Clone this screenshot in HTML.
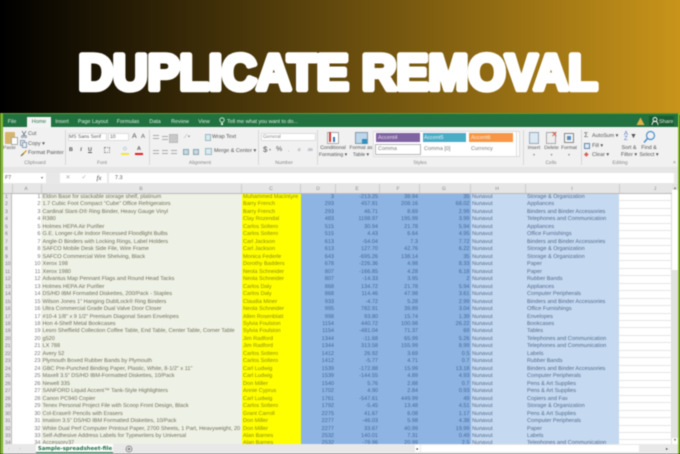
<!DOCTYPE html>
<html><head><meta charset="utf-8"><title>Duplicate Removal</title>
<style>
html,body{margin:0;padding:0;background:#000}
body{width:680px;height:454px;overflow:hidden;position:relative;font-family:"Liberation Sans",sans-serif;text-rendering:geometricPrecision}
#top{position:absolute;left:0;top:0;width:680px;height:115px;background:linear-gradient(90deg,#000 0%,#c8941a 100%)}
#top svg{position:absolute;left:0;top:0;filter:blur(.4px)}
#app{position:absolute;left:0;top:113px;width:680px;height:341px;background:#f0f0f0;overflow:hidden;filter:blur(.5px)}
#app *{box-sizing:border-box}
.a{position:absolute;white-space:nowrap;font-size:5.4px;line-height:8px;color:#555}
.c{transform:translateX(-50%);text-align:center}
.w{color:#dfeee2}
.l{color:#888;font-size:5px}
.b{position:absolute}
#grid{position:absolute;left:3px;top:81px;width:669px}
#grid p{margin:0;height:7.47px;display:grid;grid-template-columns:9px 29px 200.5px 59px 34.5px 44px 40px 51.5px 55px 93.5px 52.5px;font-size:5.55px;line-height:7.47px}
#grid i{font-style:normal;white-space:nowrap;overflow:hidden;display:block;height:7.47px;padding:0 1px}
#grid i:nth-child(1){background:#e6e6e6;color:#777;padding:0 0 0 2px;border-right:1px solid #bbb;font-size:5px}
#grid i:nth-child(2){background:#fff;color:#777;text-align:right;padding-right:.5px}
#grid i:nth-child(3){background:#eef1e5;color:#6f6f5a;padding-left:1.5px}
#grid i:nth-child(4){background:#ff0;color:#8f8f10;padding-left:1.5px}
#grid i:nth-child(n+5):nth-child(-n+8){background:#8db4e2;color:#47699a;text-align:right}
#grid i:nth-child(9),#grid i:nth-child(10){background:#c5d9f1;color:#546c8c;padding-left:1.5px}
#grid i:nth-child(11){background:#fff;border-bottom:1px solid #e6e6e6;border-right:1px solid #ddd}
</style></head><body>
<div id="top">
<svg width="680" height="115"><text x="78.5" y="89.5" font-family="Liberation Sans,sans-serif" font-weight="700" font-size="50" textLength="519" lengthAdjust="spacingAndGlyphs" fill="#fff" stroke="#fff" stroke-width="5.6" stroke-linejoin="round">DUPLICATE REMOVAL</text></svg>
</div>
<div id="app">
<div class="b" style="left:0;top:0;width:680px;height:14px;background:#217240"></div>
<div class="b" style="left:0;top:0;width:680px;height:1px;background:#5e9a30"></div>
<div class="b" style="left:27px;top:4px;width:24px;height:10px;background:#f4f4f4"></div>
<span class="a c w" style="left:12px;top:5px">File</span>
<span class="a c" style="left:39px;top:5px;color:#217346">Home</span>
<span class="a c w" style="left:62px;top:5px">Insert</span>
<span class="a c w" style="left:93px;top:5px">Page Layout</span>
<span class="a c w" style="left:128px;top:5px">Formulas</span>
<span class="a c w" style="left:155px;top:5px">Data</span>
<span class="a c w" style="left:180px;top:5px">Review</span>
<span class="a c w" style="left:204px;top:5px">View</span>
<svg class="b" style="left:219px;top:4px" width="6" height="9"><circle cx="3" cy="3" r="2.2" fill="none" stroke="#e8f2e8" stroke-width=".8"/><path d="M2 6h2v2H2z" fill="#e8f2e8"/></svg>
<span class="a w" style="left:227px;top:5px">Tell me what you want to do...</span>
<svg class="b" style="left:636px;top:4px" width="9" height="9"><path d="M4.5 .5L8.5 8H.5z" fill="#e3b04a"/></svg>
<div class="b" style="left:649px;top:3px;width:25px;height:10px;background:#1a5c33"></div>
<span class="a w" style="left:659px;top:5px">Share</span>
<svg class="b" style="left:651px;top:3px" width="8" height="10"><circle cx="4" cy="3.5" r="2" fill="none" stroke="#fff" stroke-width=".9"/><path d="M1 9c0-5 6-5 6 0" fill="none" stroke="#fff" stroke-width=".9"/></svg>

<div class="b" style="left:2px;top:14px;width:676px;height:40px;background:#f1f1f1"></div>
<div class="b" style="left:2px;top:54px;width:676px;height:6px;background:#e6e6e6"></div>
<!-- clipboard -->
<div class="b" style="left:5px;top:19px;width:10px;height:12px;background:#d8b36a;border-radius:1px"></div>
<div class="b" style="left:11px;top:24px;width:7px;height:8px;background:#fff;border:.5px solid #aaa"></div>
<span class="a" style="left:3px;top:31px;font-size:5px;color:#666">Paste</span>
<svg class="b" style="left:20px;top:17px" width="8" height="8"><path d="M2 1l3 5M6 1L3 6" stroke="#6a7a8a" stroke-width=".8" fill="none"/><circle cx="2.4" cy="6.6" r="1" fill="none" stroke="#6a7a8a" stroke-width=".6"/><circle cx="5.6" cy="6.6" r="1" fill="none" stroke="#6a7a8a" stroke-width=".6"/></svg>
<div class="b" style="left:20px;top:27px;width:5px;height:6px;background:#eaf0f6;border:.5px solid #8aa0b8"></div>
<div class="b" style="left:22px;top:29px;width:5px;height:6px;background:#eaf0f6;border:.5px solid #8aa0b8"></div>
<svg class="b" style="left:20px;top:36px" width="8" height="8"><path d="M1 7L4 4" stroke="#7a5a30" stroke-width="1.2"/><path d="M3.5 3.5L6 1l1 1-2.5 2.5z" fill="#e0a030"/></svg>
<span class="a" style="left:28px;top:17px">Cut</span>
<span class="a" style="left:28px;top:27px">Copy ▾</span>
<span class="a" style="left:28px;top:36px">Format Painter</span>
<span class="a c l" style="left:35px;top:46px">Clipboard</span>
<div class="b" style="left:65px;top:17px;width:1px;height:35px;background:#d8d8d8"></div>
<!-- font -->
<div class="b" style="left:68px;top:20px;width:39px;height:8px;background:#fff;border:.5px solid #ddd"></div>
<span class="a" style="left:69px;top:20px;font-size:5px">MS Sans Serif</span>
<div class="b" style="left:108px;top:20px;width:21px;height:8px;background:#fff;border:.5px solid #ddd"></div>
<span class="a" style="left:110px;top:20px;font-size:5px">10</span>
<span class="a" style="left:132px;top:20px;font-size:7px">A</span><span class="a" style="left:141px;top:20px;font-size:6px">A</span>
<span class="a c" style="left:71px;top:33px;font-weight:700">B</span>
<span class="a c" style="left:81px;top:33px;font-style:italic;font-weight:700">I</span>
<span class="a c" style="left:90px;top:33px;text-decoration:underline;font-weight:700">U</span>
<div class="b" style="left:104px;top:34px;width:6px;height:6px;border:.6px dotted #888"></div>
<div class="b" style="left:121px;top:40px;width:8px;height:2px;background:#f5e33d"></div>
<span class="a c" style="left:125px;top:32px;color:#6a8fc0">◇</span>
<span class="a c" style="left:139px;top:32px;font-weight:700;color:#555">A</span>
<div class="b" style="left:135px;top:40px;width:8px;height:2px;background:#e21b1b"></div>
<span class="a c l" style="left:102px;top:46px">Font</span>
<div class="b" style="left:149px;top:17px;width:1px;height:35px;background:#d8d8d8"></div>
<!-- alignment -->
<div class="b" style="left:153px;top:22px;width:6px;height:4px;border-top:1px solid #aaa;border-bottom:1px solid #aaa"></div>
<div class="b" style="left:162px;top:23px;width:6px;height:4px;border-top:1px solid #aaa;border-bottom:1px solid #aaa"></div>
<div class="b" style="left:169px;top:21px;width:9px;height:9px;background:#c8c8c8;border:1px solid #bbb"></div>
<span class="a c" style="left:187px;top:20px;color:#888">⟋▾</span>
<div class="b" style="left:153px;top:37px;width:6px;height:4px;border-top:1px solid #aaa;border-bottom:1px solid #aaa"></div>
<div class="b" style="left:162px;top:37px;width:6px;height:4px;border-top:1px solid #aaa;border-bottom:1px solid #aaa"></div>
<div class="b" style="left:171px;top:37px;width:6px;height:4px;border-top:1px solid #aaa;border-bottom:1px solid #aaa"></div>
<div class="b" style="left:183px;top:36px;width:6px;height:6px;background:#c8d6e6;border:.5px solid #8aa"></div>
<div class="b" style="left:193px;top:36px;width:6px;height:6px;background:#c8d6e6;border:.5px solid #8aa"></div>
<div class="b" style="left:205px;top:21px;width:6px;height:7px;background:#dce8f2;border:.5px solid #9bb"></div>
<span class="a" style="left:212px;top:20px">Wrap Text</span>
<div class="b" style="left:205px;top:35px;width:7px;height:7px;background:#dce8f2;border:.5px solid #9bb"></div>
<span class="a" style="left:214px;top:34px">Merge &amp; Center ▾</span>
<span class="a c l" style="left:200px;top:46px">Alignment</span>
<div class="b" style="left:258px;top:17px;width:1px;height:35px;background:#d8d8d8"></div>
<!-- number -->
<div class="b" style="left:261px;top:20px;width:55px;height:8px;background:#fff;border:.5px solid #ddd"></div>
<span class="a" style="left:263px;top:20px;font-size:5px;color:#888">General</span>
<span class="a" style="left:263px;top:32px;font-size:8px;line-height:10px">$</span>
<span class="a" style="left:269px;top:33px;font-size:4px;color:#888">▾</span>
<span class="a" style="left:276px;top:33px;font-size:7px">%</span>
<span class="a" style="left:288px;top:33px;font-size:4px">,</span>
<span class="a" style="left:297px;top:33px;font-size:4px;color:#668">.0</span>
<span class="a" style="left:307px;top:33px;font-size:4px;color:#668">.00</span>
<span class="a c l" style="left:284px;top:46px">Number</span>
<div class="b" style="left:317px;top:17px;width:1px;height:35px;background:#d8d8d8"></div>
<!-- conditional -->
<div class="b" style="left:327px;top:19px;width:12px;height:12px;background:#fff;border:.5px solid #aaa"></div>
<div class="b" style="left:329px;top:19px;width:2px;height:10px;background:#d43a2c"></div>
<div class="b" style="left:333px;top:24px;width:2px;height:5px;background:#3b6fb0"></div>
<span class="a c" style="left:333px;top:31px;font-size:5.1px">Conditional</span>
<span class="a c" style="left:333px;top:38px;font-size:5.1px">Formatting ▾</span>
<div class="b" style="left:355px;top:19px;width:13px;height:12px;background:#bcd7ea;border:.5px solid #89a"></div>
<div class="b" style="left:362px;top:26px;width:5px;height:5px;background:#2f8fc0"></div>
<span class="a c" style="left:361px;top:31px;font-size:5.1px">Format as</span>
<span class="a c" style="left:361px;top:38px;font-size:5.1px">Table ▾</span>
<!-- styles -->
<div class="b" style="left:373px;top:18px;width:147px;height:26px;background:#fff;border:.5px solid #ddd"></div>
<div class="b" style="left:376px;top:20px;width:44px;height:9px;background:#8064a2"></div>
<span class="a" style="left:378px;top:21px;color:#e8e0f0">Accent4</span>
<div class="b" style="left:423px;top:20px;width:43px;height:9px;background:#4bacc6"></div>
<span class="a" style="left:424px;top:21px;color:#e6f5f8">Accent5</span>
<div class="b" style="left:469px;top:20px;width:44px;height:9px;background:#f79646"></div>
<span class="a" style="left:471px;top:21px;color:#fff0e0">Accent6</span>
<div class="b" style="left:375px;top:31px;width:46px;height:11px;background:#fff;border:1px solid #b5b5b5"></div>
<span class="a" style="left:378px;top:32px;color:#777">Comma</span>
<span class="a" style="left:424px;top:32px;color:#777">Comma [0]</span>
<span class="a" style="left:471px;top:32px;color:#777">Currency</span>
<div class="b" style="left:516px;top:18px;width:1px;height:26px;background:#ddd"></div>
<span class="a c l" style="left:420px;top:46px">Styles</span>
<div class="b" style="left:523px;top:17px;width:1px;height:35px;background:#d8d8d8"></div>
<!-- cells -->
<div class="b" style="left:529px;top:19px;width:10px;height:12px;background:#dce8f2;border:.5px solid #9ab"></div>
<div class="b" style="left:546px;top:19px;width:10px;height:12px;background:#eee;border:.5px solid #aaa"></div>
<span class="a" style="left:551px;top:18px;color:#d84a3a;font-size:8px">✕</span>
<div class="b" style="left:564px;top:20px;width:10px;height:10px;background:#f4f4f4;border:1px solid #888"></div>
<div class="b" style="left:567px;top:23px;width:4px;height:4px;background:#5b8fc0"></div>
<span class="a c" style="left:534px;top:31px;font-size:5px">Insert</span>
<span class="a c" style="left:551.5px;top:31px;font-size:5px">Delete</span>
<span class="a c" style="left:569px;top:31px;font-size:5px">Format</span>
<span class="a c" style="left:534px;top:38px;font-size:4px;color:#888">▾</span>
<span class="a c" style="left:551.5px;top:38px;font-size:4px;color:#888">▾</span>
<span class="a c" style="left:569px;top:38px;font-size:4px;color:#888">▾</span>
<span class="a c l" style="left:551px;top:46px">Cells</span>
<div class="b" style="left:581px;top:17px;width:1px;height:35px;background:#d8d8d8"></div>
<!-- editing -->
<span class="a" style="left:584px;top:19px;font-size:7px">Σ</span><span class="a" style="left:592px;top:19px">AutoSum ▾</span>
<div class="b" style="left:584px;top:30px;width:6px;height:6px;background:#dce8f2;border:.5px solid #68a"></div><span class="a" style="left:592px;top:29px">Fill ▾</span>
<span class="a" style="left:584px;top:38px;color:#d8605a;font-size:6px">◆</span><span class="a" style="left:592px;top:38px">Clear ▾</span>
<span class="a" style="left:624px;top:19px;font-size:6px;line-height:5px;color:#5b7cc0;white-space:normal;width:5px">A Z</span>
<span class="a" style="left:630px;top:20px;font-size:7px;color:#555">▼</span>
<svg class="b" style="left:642px;top:17px" width="14" height="14"><circle cx="8.5" cy="5.5" r="4" fill="none" stroke="#4a90d0" stroke-width="1.2"/><path d="M5.5 8.5L2 12.5" stroke="#4a90d0" stroke-width="1.4"/></svg>
<span class="a c" style="left:629px;top:31px">Sort &amp;</span>
<span class="a c" style="left:629px;top:38px">Filter ▾</span>
<span class="a c" style="left:649px;top:31px">Find &amp;</span>
<span class="a c" style="left:649px;top:38px">Select ▾</span>
<span class="a c l" style="left:620px;top:46px">Editing</span>
<span class="a" style="left:673px;top:46px;font-size:5px;color:#777">˄</span>
<!-- formula bar -->
<div class="b" style="left:2px;top:60px;width:676px;height:11px;background:#e8e8e8"></div>
<div class="b" style="left:3px;top:60px;width:43px;height:10px;background:#fff"></div>
<span class="a" style="left:5px;top:60.5px;color:#555">F7</span>
<span class="a" style="left:41px;top:60.5px;font-size:4px;color:#666">▾</span>
<div class="b" style="left:60px;top:60px;width:47px;height:10px;background:#fff"></div>
<span class="a c" style="left:68px;top:60.5px;color:#aaa;font-size:6px">✕</span>
<span class="a c" style="left:84px;top:60.5px;color:#aaa;font-size:6px">✓</span>
<span class="a c" style="left:99px;top:60.5px;font-style:italic;font-family:'Liberation Serif',serif;font-size:7px;color:#555">fx</span>
<div class="b" style="left:109px;top:60px;width:565px;height:10px;background:#fff"></div>
<span class="a" style="left:115px;top:60.5px;color:#555">7.3</span>
<!-- column header -->
<div class="b" style="left:3px;top:71px;width:669px;height:10px;background:#e6e6e6;border-bottom:.5px solid #bbb"></div>
<div class="b" style="left:12px;top:71px;width:1px;height:9px;background:#ccc"></div>
<div class="b" style="left:41px;top:71px;width:1px;height:9px;background:#ccc"></div>
<div class="b" style="left:241px;top:71px;width:1px;height:9px;background:#ccc"></div>
<div class="b" style="left:300px;top:71px;width:1px;height:9px;background:#ccc"></div>
<div class="b" style="left:335px;top:71px;width:1px;height:9px;background:#ccc"></div>
<div class="b" style="left:379px;top:71px;width:1px;height:9px;background:#ccc"></div>
<div class="b" style="left:419px;top:71px;width:1px;height:9px;background:#ccc"></div>
<div class="b" style="left:470px;top:71px;width:1px;height:9px;background:#ccc"></div>
<div class="b" style="left:525px;top:71px;width:1px;height:9px;background:#ccc"></div>
<div class="b" style="left:619px;top:71px;width:1px;height:9px;background:#ccc"></div>
<span class="a c l" style="left:26px;top:72px">A</span><span class="a c l" style="left:141px;top:72px">B</span><span class="a c l" style="left:271px;top:72px">C</span><span class="a c l" style="left:318px;top:72px">D</span><span class="a c l" style="left:357px;top:72px">E</span><span class="a c l" style="left:398px;top:72px">F</span><span class="a c l" style="left:444px;top:72px">G</span><span class="a c l" style="left:497px;top:72px">H</span><span class="a c l" style="left:572px;top:72px">I</span><span class="a c l" style="left:655px;top:72px">J</span>
<!-- grid -->
<div id="grid">
<p><i>1</i><i>1</i><i>Eldon Base for stackable storage shelf, platinum</i><i>Muhammed MacIntyre</i><i>3</i><i>-213.25</i><i>38.94</i><i>35</i><i>Nunavut</i><i>Storage &amp; Organization</i><i></i></p>
<p><i>2</i><i>2</i><i>1.7 Cubic Foot Compact "Cube" Office Refrigerators</i><i>Barry French</i><i>293</i><i>457.81</i><i>208.16</i><i>68.02</i><i>Nunavut</i><i>Appliances</i><i></i></p>
<p><i>3</i><i>3</i><i>Cardinal Slant-D® Ring Binder, Heavy Gauge Vinyl</i><i>Barry French</i><i>293</i><i>46.71</i><i>8.69</i><i>2.99</i><i>Nunavut</i><i>Binders and Binder Accessories</i><i></i></p>
<p><i>4</i><i>4</i><i>R380</i><i>Clay Rozendal</i><i>483</i><i>1198.97</i><i>195.99</i><i>3.99</i><i>Nunavut</i><i>Telephones and Communication</i><i></i></p>
<p><i>5</i><i>5</i><i>Holmes HEPA Air Purifier</i><i>Carlos Soltero</i><i>515</i><i>30.94</i><i>21.78</i><i>5.94</i><i>Nunavut</i><i>Appliances</i><i></i></p>
<p><i>6</i><i>6</i><i>G.E. Longer-Life Indoor Recessed Floodlight Bulbs</i><i>Carlos Soltero</i><i>515</i><i>4.43</i><i>6.64</i><i>4.95</i><i>Nunavut</i><i>Office Furnishings</i><i></i></p>
<p><i>7</i><i>7</i><i>Angle-D Binders with Locking Rings, Label Holders</i><i>Carl Jackson</i><i>613</i><i>-54.04</i><i>7.3</i><i>7.72</i><i>Nunavut</i><i>Binders and Binder Accessories</i><i></i></p>
<p><i>8</i><i>8</i><i>SAFCO Mobile Desk Side File, Wire Frame</i><i>Carl Jackson</i><i>613</i><i>127.70</i><i>42.76</i><i>6.22</i><i>Nunavut</i><i>Storage &amp; Organization</i><i></i></p>
<p><i>9</i><i>9</i><i>SAFCO Commercial Wire Shelving, Black</i><i>Monica Federle</i><i>643</i><i>-695.26</i><i>138.14</i><i>35</i><i>Nunavut</i><i>Storage &amp; Organization</i><i></i></p>
<p><i>10</i><i>10</i><i>Xerox 198</i><i>Dorothy Badders</i><i>678</i><i>-226.36</i><i>4.98</i><i>8.33</i><i>Nunavut</i><i>Paper</i><i></i></p>
<p><i>11</i><i>11</i><i>Xerox 1980</i><i>Neola Schneider</i><i>807</i><i>-166.85</i><i>4.28</i><i>6.18</i><i>Nunavut</i><i>Paper</i><i></i></p>
<p><i>12</i><i>12</i><i>Advantus Map Pennant Flags and Round Head Tacks</i><i>Neola Schneider</i><i>807</i><i>-14.33</i><i>3.95</i><i>2</i><i>Nunavut</i><i>Rubber Bands</i><i></i></p>
<p><i>13</i><i>13</i><i>Holmes HEPA Air Purifier</i><i>Carlos Daly</i><i>868</i><i>134.72</i><i>21.78</i><i>5.94</i><i>Nunavut</i><i>Appliances</i><i></i></p>
<p><i>14</i><i>14</i><i>DS/HD IBM Formatted Diskettes, 200/Pack - Staples</i><i>Carlos Daly</i><i>868</i><i>114.46</i><i>47.98</i><i>3.61</i><i>Nunavut</i><i>Computer Peripherals</i><i></i></p>
<p><i>15</i><i>15</i><i>Wilson Jones 1" Hanging DublLock® Ring Binders</i><i>Claudia Miner</i><i>933</i><i>-4.72</i><i>5.28</i><i>2.99</i><i>Nunavut</i><i>Binders and Binder Accessories</i><i></i></p>
<p><i>16</i><i>16</i><i>Ultra Commercial Grade Dual Valve Door Closer</i><i>Neola Schneider</i><i>995</i><i>782.91</i><i>39.89</i><i>3.04</i><i>Nunavut</i><i>Office Furnishings</i><i></i></p>
<p><i>17</i><i>17</i><i>#10-4 1/8" x 9 1/2" Premium Diagonal Seam Envelopes</i><i>Allen Rosenblatt</i><i>998</i><i>93.80</i><i>15.74</i><i>1.39</i><i>Nunavut</i><i>Envelopes</i><i></i></p>
<p><i>18</i><i>18</i><i>Hon 4-Shelf Metal Bookcases</i><i>Sylvia Foulston</i><i>1154</i><i>440.72</i><i>100.98</i><i>26.22</i><i>Nunavut</i><i>Bookcases</i><i></i></p>
<p><i>19</i><i>19</i><i>Lesro Sheffield Collection Coffee Table, End Table, Center Table, Corner Table</i><i>Sylvia Foulston</i><i>1154</i><i>-481.04</i><i>71.37</i><i>69</i><i>Nunavut</i><i>Tables</i><i></i></p>
<p><i>20</i><i>20</i><i>g520</i><i>Jim Radford</i><i>1344</i><i>-11.68</i><i>65.99</i><i>5.26</i><i>Nunavut</i><i>Telephones and Communication</i><i></i></p>
<p><i>21</i><i>21</i><i>LX 788</i><i>Jim Radford</i><i>1344</i><i>313.58</i><i>155.99</i><i>8.99</i><i>Nunavut</i><i>Telephones and Communication</i><i></i></p>
<p><i>22</i><i>22</i><i>Avery 52</i><i>Carlos Soltero</i><i>1412</i><i>26.92</i><i>3.69</i><i>0.5</i><i>Nunavut</i><i>Labels</i><i></i></p>
<p><i>23</i><i>23</i><i>Plymouth Boxed Rubber Bands by Plymouth</i><i>Carlos Soltero</i><i>1412</i><i>-5.77</i><i>4.71</i><i>0.7</i><i>Nunavut</i><i>Rubber Bands</i><i></i></p>
<p><i>24</i><i>24</i><i>GBC Pre-Punched Binding Paper, Plastic, White, 8-1/2" x 11"</i><i>Carl Ludwig</i><i>1539</i><i>-172.88</i><i>15.99</i><i>13.18</i><i>Nunavut</i><i>Binders and Binder Accessories</i><i></i></p>
<p><i>25</i><i>25</i><i>Maxell 3.5" DS/HD IBM-Formatted Diskettes, 10/Pack</i><i>Carl Ludwig</i><i>1539</i><i>-144.55</i><i>4.89</i><i>4.93</i><i>Nunavut</i><i>Computer Peripherals</i><i></i></p>
<p><i>26</i><i>26</i><i>Newell 335</i><i>Don Miller</i><i>1540</i><i>5.76</i><i>2.88</i><i>0.7</i><i>Nunavut</i><i>Pens &amp; Art Supplies</i><i></i></p>
<p><i>27</i><i>27</i><i>SANFORD Liquid Accent™ Tank-Style Highlighters</i><i>Annie Cyprus</i><i>1702</i><i>4.90</i><i>2.84</i><i>0.93</i><i>Nunavut</i><i>Pens &amp; Art Supplies</i><i></i></p>
<p><i>28</i><i>28</i><i>Canon PC940 Copier</i><i>Carl Ludwig</i><i>1761</i><i>-547.61</i><i>449.99</i><i>49</i><i>Nunavut</i><i>Copiers and Fax</i><i></i></p>
<p><i>29</i><i>29</i><i>Tenex Personal Project File with Scoop Front Design, Black</i><i>Carlos Soltero</i><i>1792</i><i>-5.45</i><i>13.48</i><i>4.51</i><i>Nunavut</i><i>Storage &amp; Organization</i><i></i></p>
<p><i>30</i><i>30</i><i>Col-Erase® Pencils with Erasers</i><i>Grant Carroll</i><i>2275</i><i>41.67</i><i>6.08</i><i>1.17</i><i>Nunavut</i><i>Pens &amp; Art Supplies</i><i></i></p>
<p><i>31</i><i>31</i><i>Imation 3.5" DS/HD IBM Formatted Diskettes, 10/Pack</i><i>Don Miller</i><i>2277</i><i>-46.03</i><i>5.98</i><i>4.38</i><i>Nunavut</i><i>Computer Peripherals</i><i></i></p>
<p><i>32</i><i>32</i><i>White Dual Perf Computer Printout Paper, 2700 Sheets, 1 Part, Heavyweight, 20 lbs</i><i>Don Miller</i><i>2277</i><i>33.67</i><i>40.99</i><i>19.99</i><i>Nunavut</i><i>Paper</i><i></i></p>
<p><i>33</i><i>33</i><i>Self-Adhesive Address Labels for Typewriters by Universal</i><i>Alan Barnes</i><i>2532</i><i>140.01</i><i>7.31</i><i>0.49</i><i>Nunavut</i><i>Labels</i><i></i></p>
<p><i>34</i><i>34</i><i>Accessory37</i><i>Alan Barnes</i><i>2532</i><i>-78.96</i><i>20.99</i><i>2.5</i><i>Nunavut</i><i>Telephones and Communication</i><i></i></p>
</div>
<!-- scrollbar -->
<div class="b" style="left:672px;top:71px;width:6px;height:260px;background:#e2e2e2"></div>
<div class="b" style="left:672px;top:77px;width:6px;height:80px;background:#fff"></div>
<span class="a c" style="left:675px;top:71px;font-size:4px;color:#555">▴</span>
<div class="b" style="left:672px;top:325px;width:6px;height:6px;background:#fff"></div>
<span class="a c" style="left:675px;top:323px;font-size:4px;color:#555">▾</span>
<!-- bottom bar -->
<div class="b" style="left:2px;top:331px;width:676px;height:10px;background:#e8e8e8"></div>
<div class="b" style="left:36px;top:331px;width:77px;height:9px;background:#fff;border-bottom:1px solid #217346"></div>
<span class="a c" style="left:75px;top:331.5px;color:#217346;font-weight:700;font-family:'DejaVu Sans',sans-serif;font-size:5.4px">Sample-spreadsheet-file</span>
<span class="a c" style="left:9px;top:332px;color:#bbb;font-size:5px">‹</span>
<span class="a c" style="left:20px;top:332px;color:#bbb;font-size:5px">›</span>
<svg class="b" style="left:125px;top:332px" width="8" height="8"><circle cx="4" cy="4" r="3" fill="none" stroke="#777" stroke-width=".7"/><path d="M4 2.2v3.6M2.2 4h3.6" stroke="#666" stroke-width=".7"/></svg>
<div class="b" style="left:415px;top:332px;width:5px;height:7px;background:#fff"></div>
<span class="a c" style="left:417.5px;top:331.5px;font-size:4px;color:#333">▸</span>
<div class="b" style="left:421px;top:332px;width:218px;height:7px;background:#fff"></div>
<span class="a c" style="left:667px;top:331.5px;font-size:4px;color:#333">▸</span>
<div class="b" style="left:0;top:0;width:2.5px;height:341px;background:#7fb62e"></div>
<div class="b" style="left:678px;top:0;width:2px;height:341px;background:#7fb62e"></div>
</div>
</body></html>
